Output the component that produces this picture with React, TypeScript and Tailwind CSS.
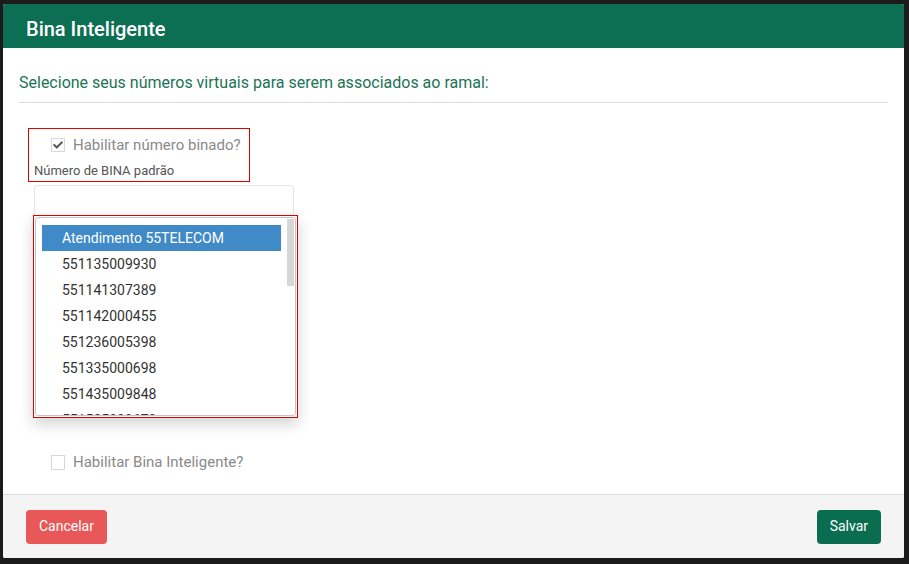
import React from "react";
import { FaCheck } from "react-icons/fa";

const numbers = [
  "551135009930",
  "551141307389",
  "551142000455",
  "551236005398",
  "551335000698",
  "551435009848",
  "551535009670",
];

const App: React.FC = () => {
  return (
    <div
      className="w-[909px] h-[564px] bg-[#1b1b1b] pt-[4px] pl-[3px] overflow-hidden"
      style={{ fontFamily: "Roboto, 'Liberation Sans', sans-serif" }}
    >
      <div className="w-[901px] h-[554px] bg-white flex flex-col rounded-[2px] overflow-hidden">
        {/* header */}
        <div className="h-[44px] bg-[#0c6e53] flex items-center px-[23px] pt-[6px]">
          <h1 className="text-white text-[20px] font-medium leading-[24px]">Bina Inteligente</h1>
        </div>

        {/* body */}
        <div className="flex-1 px-[16px] relative">
          <p className="text-[#1b7455] text-[16px] mt-[25px] leading-[20px]">
            Selecione seus números virtuais para serem associados ao ramal:
          </p>
          <div className="h-px bg-[#dcdcdc] mt-[9px]" />

          <div className="mt-[25px] ml-[9px] w-[222px] h-[54px] border border-[#e00000] pt-[6px]">
            <label className="flex items-center gap-[8px] ml-[22px] h-[20px] whitespace-nowrap">
              <span className="w-[14px] h-[14px] border border-[#d9d9d9] flex items-center justify-center text-[#555]">
                <FaCheck className="w-[10px] h-[10px]" />
              </span>
              <span className="text-[#8a8a8a] text-[15px]">Habilitar número binado?</span>
            </label>
            <div className="text-[#555] text-[13px] ml-[5px] mt-[8px] leading-[16px] whitespace-nowrap">
              Número de BINA padrão
            </div>
          </div>

          <div className="ml-[15px] mt-[3px] w-[260px] h-[34px] border border-[#e6e6e6] rounded-[4px] bg-white" />

          {/* dropdown list */}
          <div className="absolute left-[30px] top-[167px] w-[265px] h-[203px] border border-[#e00000] bg-white shadow-[0_6px_14px_rgba(0,0,0,0.18)]">
            <div className="m-px h-[199px] border border-[#c4c4c4] rounded-[3px] flex overflow-hidden">
              <div className="flex-1 pt-[7px] pl-[6px] pr-[6px] overflow-hidden">
                <div className="h-[26px] bg-[#408ac8] text-white text-[14px] flex items-center pl-[20px]">
                  Atendimento 55TELECOM
                </div>
                {numbers.map((n) => (
                  <div key={n} className="h-[26px] text-[#333] text-[14px] flex items-center pl-[20px]">
                    {n}
                  </div>
                ))}
              </div>
              <div className="w-[7px] mr-[1px] pt-[1px]">
                <div className="h-[67px] bg-[#d6d6d6]" />
              </div>
            </div>
          </div>

          <label className="flex items-center gap-[8px] ml-[32px] mt-[233px] h-[20px] whitespace-nowrap">
            <span className="w-[14px] h-[15px] border border-[#d6d6d6]" />
            <span className="text-[#8a8a8a] text-[15px]">Habilitar Bina Inteligente?</span>
          </label>
        </div>

        {/* footer */}
        <div className="h-[64px] bg-[#f4f4f4] border-t border-[#dcdcdc] flex items-center justify-between px-[23px]">
          <button className="h-[34px] w-[81px] rounded-[4px] bg-[#e85858] text-white text-[14px]">
            Cancelar
          </button>
          <button className="h-[34px] px-[13px] rounded-[4px] bg-[#0a6d4f] text-white text-[14px]">
            Salvar
          </button>
        </div>
      </div>
    </div>
  );
};

export default App;
